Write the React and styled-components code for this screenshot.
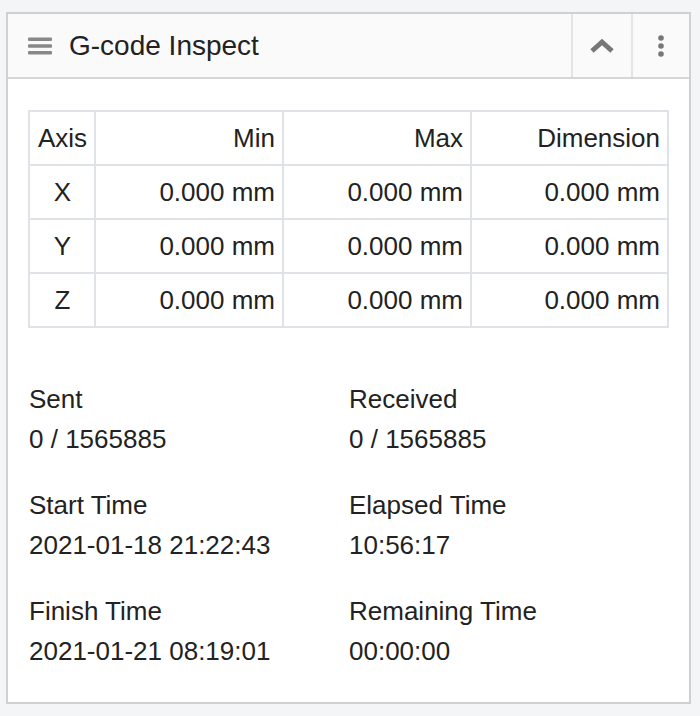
import React from "react";
import styled, { createGlobalStyle } from "styled-components";

const GlobalStyle = createGlobalStyle`
  html, body {
    margin: 0;
    padding: 0;
    background: #f4f5f7;
    font-family: "Liberation Sans", Arial, Helvetica, sans-serif;
    color: #222;
  }
  * {
    box-sizing: border-box;
  }
`;

const axes = ["X", "Y", "Z"];

const stats = [
  { label: "Sent", value: "0 / 1565885" },
  { label: "Received", value: "0 / 1565885" },
  { label: "Start Time", value: "2021-01-18 21:22:43" },
  { label: "Elapsed Time", value: "10:56:17" },
  { label: "Finish Time", value: "2021-01-21 08:19:01" },
  { label: "Remaining Time", value: "00:00:00" },
];

const MenuIcon = () => (
  <svg width="24" height="20" viewBox="0 0 24 20">
    <rect x="0" y="1.5" width="24" height="3.6" rx="1" fill="#888" />
    <rect x="0" y="8.2" width="24" height="3.6" rx="1" fill="#888" />
    <rect x="0" y="14.9" width="24" height="3.6" rx="1" fill="#888" />
  </svg>
);

const ChevronUp = () => (
  <svg width="26" height="16" viewBox="0 0 26 16">
    <path
      d="M3 13 L13 4 L23 13"
      fill="none"
      stroke="#777"
      strokeWidth="5"
      strokeLinejoin="miter"
    />
  </svg>
);

const Kebab = () => (
  <svg width="8" height="24" viewBox="0 0 8 24">
    <circle cx="4" cy="4" r="2.8" fill="#777" />
    <circle cx="4" cy="12" r="2.8" fill="#777" />
    <circle cx="4" cy="20" r="2.8" fill="#777" />
  </svg>
);

const App = () => {
  return (
    <>
      <GlobalStyle />
      <Panel>
        <Header>
          <TitleBar>
            <MenuIcon />
            <Title>G-code Inspect</Title>
          </TitleBar>
          <HeaderButton>
            <ChevronUp />
          </HeaderButton>
          <HeaderButton $narrow>
            <Kebab />
          </HeaderButton>
        </Header>
        <Body>
          <AxisTable>
            <colgroup>
              <col style={{ width: 66 }} />
              <col style={{ width: 188 }} />
              <col style={{ width: 188 }} />
              <col />
            </colgroup>
            <thead>
              <tr>
                <Cell as="th" $center>
                  Axis
                </Cell>
                <Cell as="th">Min</Cell>
                <Cell as="th">Max</Cell>
                <Cell as="th">Dimension</Cell>
              </tr>
            </thead>
            <tbody>
              {axes.map((axis) => (
                <tr key={`axis-row-${axis}`}>
                  <Cell $center>{axis}</Cell>
                  <Cell>0.000 mm</Cell>
                  <Cell>0.000 mm</Cell>
                  <Cell>0.000 mm</Cell>
                </tr>
              ))}
            </tbody>
          </AxisTable>
          <StatsGrid>
            {stats.map((item, index) => (
              <StatItem key={`stat-${index}`}>
                <StatText>{item.label}</StatText>
                <StatText>{item.value}</StatText>
              </StatItem>
            ))}
          </StatsGrid>
        </Body>
      </Panel>
    </>
  );
};

export default App;

const Panel = styled.section`
  margin: 12px 0 0 6px;
  width: 685px;
  background: #fff;
  border: 2px solid #d0d0d0;
`;

const Header = styled.div`
  display: flex;
  height: 65px;
  background: #fafafa;
  border-bottom: 2px solid #d6d6d6;
`;

const TitleBar = styled.div`
  flex: 1;
  display: flex;
  align-items: center;
  gap: 17px;
  padding-left: 20px;
`;

const Title = styled.span`
  font-size: 28px;
  color: #222;
  line-height: 1;
`;

const HeaderButton = styled.div`
  width: ${({ $narrow }) => ($narrow ? "58px" : "60px")};
  display: flex;
  align-items: center;
  justify-content: center;
  border-left: 2px solid #e4e4e4;
`;

const Body = styled.div`
  padding: 31px 20px 31px 20px;
`;

const AxisTable = styled.table`
  width: 641px;
  border-collapse: collapse;
  table-layout: fixed;
  font-size: 26px;
`;

const Cell = styled.td`
  border: 2px solid #dfe2e6;
  padding: 6px 7px 6px 8px;
  line-height: 40px;
  font-weight: normal;
  color: #222;
  text-align: ${({ $center }) => ($center ? "center" : "right")};
  white-space: nowrap;
`;

const StatsGrid = styled.div`
  display: grid;
  grid-template-columns: 1fr 1fr;
  row-gap: 26px;
  margin-top: 51px;
  padding-left: 1px;
`;

const StatItem = styled.div`
  display: flex;
  flex-direction: column;
`;

const StatText = styled.div`
  font-size: 26px;
  line-height: 40px;
  color: #222;
`;
